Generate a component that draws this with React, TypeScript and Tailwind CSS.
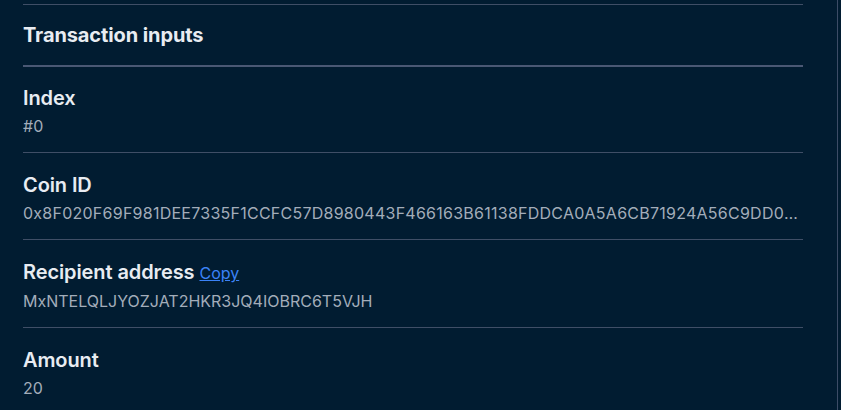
export default function App() {
  const rows: { label: string; value: string; copy?: boolean; wide?: boolean }[] = [
    { label: "Index", value: "#0" },
    {
      label: "Coin ID",
      value:
        "0x8F020F69F981DEE7335F1CCFC57D8980443F466163B61138FDDCA0A5A6CB71924A56C9DD0F1A2B3C4D5E6F",
      wide: true,
    },
    { label: "Recipient address", value: "MxNTELQLJYOZJAT2HKR3JQ4IOBRC6T5VJH", copy: true },
    { label: "Amount", value: "20" },
  ];
  return (
    <div
      className="w-[841px] h-[410px] bg-[#011c31] overflow-hidden flex"
      style={{ fontFamily: "Inter, 'Noto Sans', sans-serif" }}
    >
      <div className="ml-[23px] w-[780px] pt-[4px] flex flex-col">
        <div className="border-t border-[#3f4e66] pt-[16px] pb-[16px]">
          <div className="text-[20px] leading-[28px] font-bold text-[#e8ecf2] tracking-[-0.1px]">
            Transaction inputs
          </div>
        </div>
        {rows.map((r, i) => (
          <div
            key={r.label}
            className={
              i === 0
                ? "border-t-2 border-[#4a5874] pt-[17px] pb-[12px]"
                : "border-t border-[#3f4e66] pt-[18px] pb-[12px]"
            }
          >
            <div className="text-[20px] leading-[28px] font-semibold text-[#e8ecf2] tracking-[-0.1px] flex items-baseline gap-[5px]">
              <span>{r.label}</span>
              {r.copy && (
                <a className="text-[16px] font-normal text-[#3b82f6] underline cursor-pointer tracking-normal">
                  Copy
                </a>
              )}
            </div>
            <div
              className={
                r.wide
                  ? "text-[16px] leading-[28px] text-[#a3adba] truncate tracking-[0.25px]"
                  : "text-[16px] leading-[28px] text-[#a3adba] truncate"
              }
            >
              {r.value}
            </div>
          </div>
        ))}
      </div>
      <div className="ml-[34px] w-px h-full bg-[#3c4c66]" />
    </div>
  );
}
